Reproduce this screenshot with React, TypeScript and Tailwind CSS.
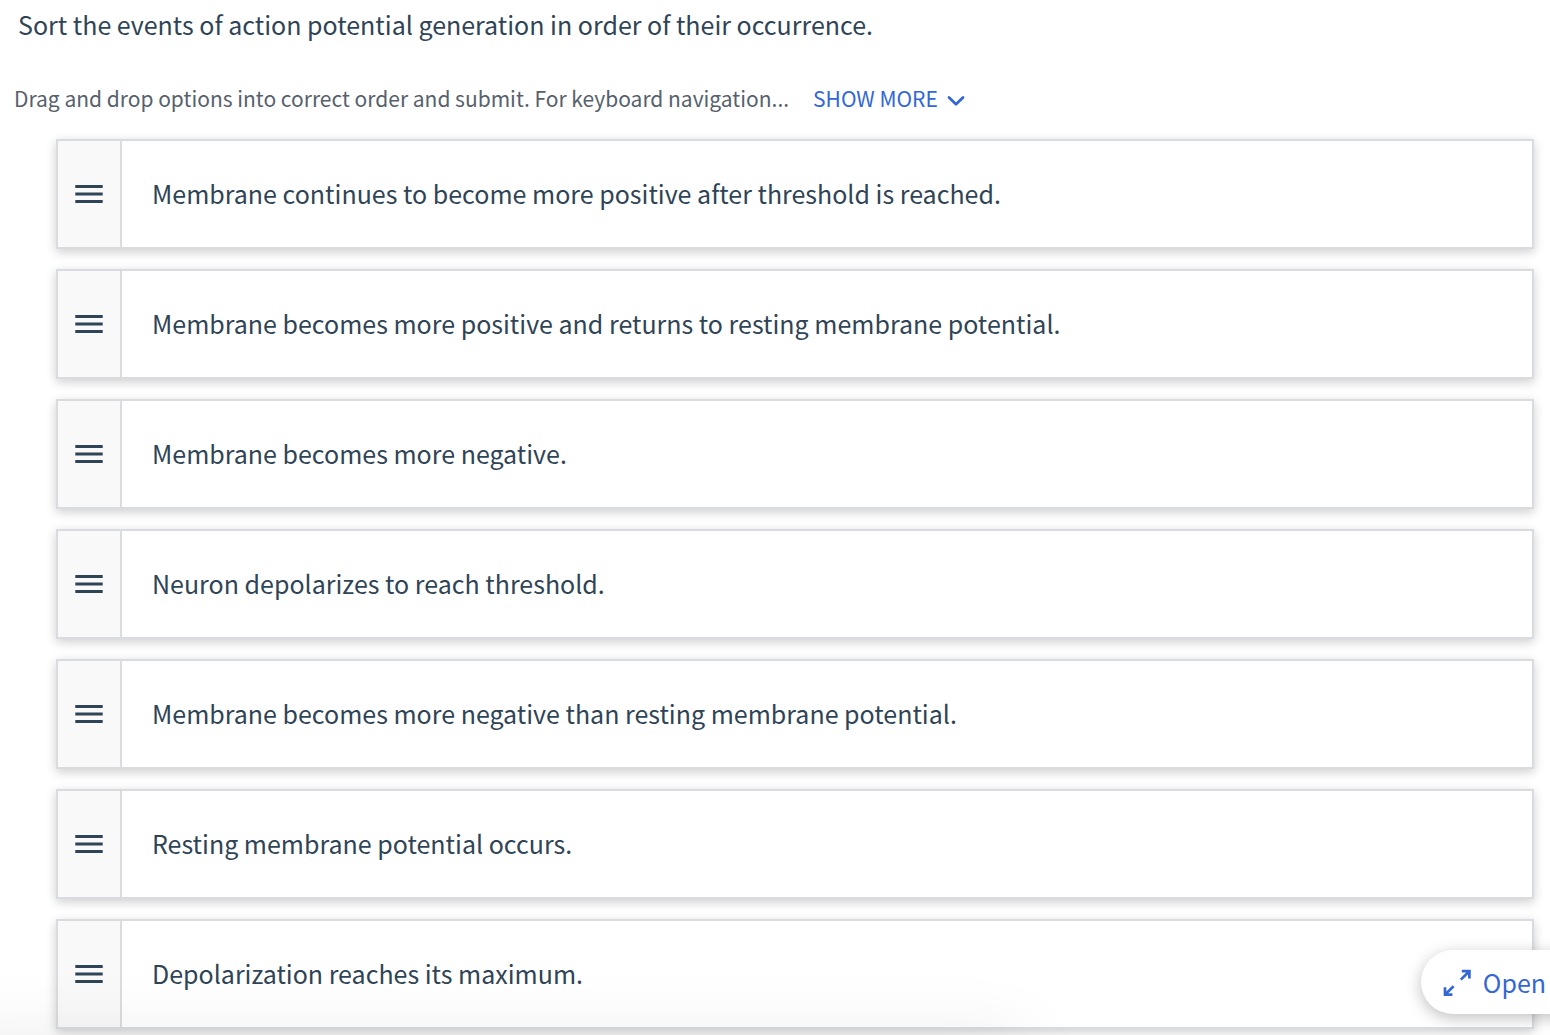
import { useState } from "react";

const EVENTS = [
  "Membrane continues to become more positive after threshold is reached.",
  "Membrane becomes more positive and returns to resting membrane potential.",
  "Membrane becomes more negative.",
  "Neuron depolarizes to reach threshold.",
  "Membrane becomes more negative than resting membrane potential.",
  "Resting membrane potential occurs.",
  "Depolarization reaches its maximum.",
];

const GripIcon = () => (
  <svg className="w-7 h-5" viewBox="0 0 28 20" fill="#2f4456" aria-hidden="true">
    <rect x="0.3" y="1" width="27.4" height="3" />
    <rect x="0.3" y="8.5" width="27.4" height="3" />
    <rect x="0.3" y="16" width="27.4" height="3" />
  </svg>
);

const ChevronIcon = () => (
  <svg
    className="w-5 h-5"
    viewBox="0 0 20 20"
    fill="none"
    stroke="currentColor"
    strokeWidth="2.8"
    strokeLinecap="round"
    strokeLinejoin="round"
    aria-hidden="true"
  >
    <path d="M3 9.4 10 16.2 17 9.4" />
  </svg>
);

const ExpandIcon = () => (
  <svg
    className="w-7 h-7"
    viewBox="0 0 28 28"
    fill="none"
    stroke="currentColor"
    strokeWidth="2.7"
    aria-hidden="true"
  >
    <path d="M18.8 3.2H26.4V10.6M26.4 3.2 17.8 11.6" />
    <path d="M2 19.2V26.6H9.4M2 26.6 10.6 18.2" />
  </svg>
);

const SortItem = ({ text, onMove }: { text: string; onMove: (step: number) => void }) => (
  <li className="flex h-[110px] border-2 border-[#d8dce0] bg-white shadow-[0_3px_10px_rgba(0,0,0,0.2)]">
    <button
      type="button"
      aria-label={`Reorder: ${text}`}
      onKeyDown={(e) => {
        if (e.key === "ArrowUp") onMove(-1);
        if (e.key === "ArrowDown") onMove(1);
      }}
      className="flex w-16 shrink-0 cursor-grab items-center justify-center border-r-2 border-[#d8dce0] bg-[#f9f9f9]"
    >
      <GripIcon />
    </button>
    <p className="flex items-center pl-[30px] pr-6 pb-0.5 text-[25px] leading-10">{text}</p>
  </li>
);

const App = () => {
  const [items, setItems] = useState(EVENTS);

  const move = (index: number, step: number) => {
    const target = index + step;
    if (target < 0 || target >= items.length) return;
    const next = [...items];
    [next[index], next[target]] = [next[target], next[index]];
    setItems(next);
  };

  return (
    <div className="relative h-screen overflow-hidden bg-white font-['Noto_Sans_CJK_SC',sans-serif] text-[#2f4456]">
      <main className="pt-1">
        <h1 className="pl-[18px] text-[25px] leading-10">
          Sort the events of action potential generation in order of their occurrence.
        </h1>
        <div className="mt-9 flex items-center gap-6 pl-3.5 text-[21px] leading-9">
          <p className="text-[#56616d]">
            Drag and drop options into correct order and submit. For keyboard navigation...
          </p>
          <button type="button" className="flex cursor-pointer items-center gap-2 text-[#3366d6]">
            SHOW MORE
            <ChevronIcon />
          </button>
        </div>

        <ol className="mt-[23px] ml-14 mr-4 flex flex-col gap-5">
          {items.map((text, i) => (
            <SortItem key={text} text={text} onMove={(step) => move(i, step)} />
          ))}
        </ol>
      </main>

      <div className="pointer-events-none absolute top-full -left-16 h-16 w-[70%] shadow-[0_0_72px_rgba(0,0,0,0.08)]" />

      <button
        type="button"
        className="absolute -right-12 bottom-[21px] flex h-16 cursor-pointer items-center gap-3 rounded-full bg-white pl-[22px] pr-[52px] text-[25px] leading-10 text-[#3366d6] shadow-[0_4px_16px_rgba(0,0,0,0.25)]"
      >
        <ExpandIcon />
        Open
      </button>
    </div>
  );
};

export default App;
